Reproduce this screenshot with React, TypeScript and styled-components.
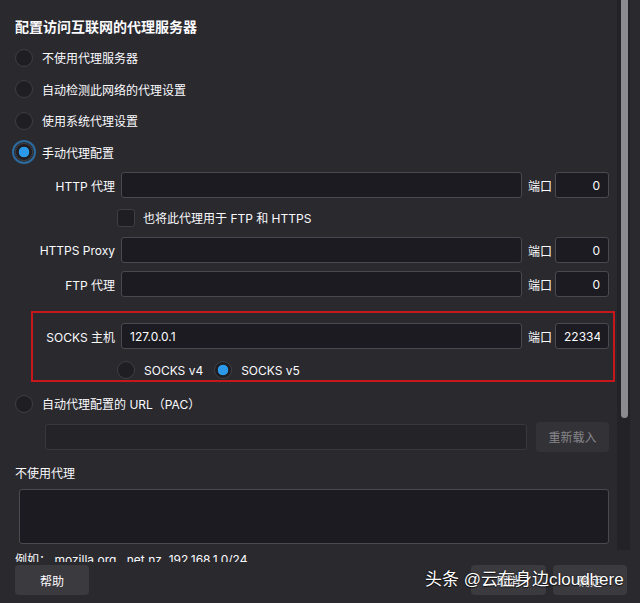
import React from 'react';
import styled, { createGlobalStyle, css } from 'styled-components';

const GlobalStyle = createGlobalStyle`
  html, body {
    margin: 0;
    padding: 0;
    background: #2a292e;
  }
  body {
    font-family: Inter, "Noto Sans CJK SC", sans-serif;
    font-size: 12px;
    color: #fbfbfe;
  }
  * {
    box-sizing: border-box;
  }
`;

const Window = styled.div`
  position: relative;
  width: 640px;
  height: 603px;
  display: flex;
  flex-direction: column;
  overflow: hidden;
  background: #2a292e;
`;

const Body = styled.div`
  display: flex;
  height: 562px;
  flex: none;
  overflow: hidden;
`;

const Content = styled.div`
  width: 617px;
  flex: none;
  padding: 17px 8px 0 15px;
`;

const ScrollTrack = styled.div`
  width: 13px;
  height: 550px;
  flex: none;
  padding: 0 2px 0 4px;
  background: #232227;
`;

const ScrollThumb = styled.div`
  width: 7px;
  height: 418px;
  border-radius: 0 0 4px 4px;
  background: #8b8a8f;
`;

const Title = styled.div`
  font-size: 14px;
  font-weight: 700;
  line-height: 20px;
  margin-bottom: 5px;
`;

const RadioRow = styled.div<{ $top?: number }>`
  display: flex;
  align-items: center;
  gap: 9px;
  height: 31.5px;
  margin-top: ${p => p.$top || 0}px;
`;

const Radio = styled.span<{ $checked?: boolean; $focus?: boolean }>`
  width: 18px;
  height: 18px;
  flex: none;
  border-radius: 50%;
  background: #1f1e23;
  border: 1px solid #3f3e44;
  ${p =>
    p.$checked &&
    css`
      background: radial-gradient(
        circle closest-side,
        #2b98e8 0,
        #2b98e8 62%,
        #1f1e23 70%
      );
    `}
  ${p =>
    p.$focus &&
    css`
      box-shadow: 0 0 0 1px #2a292e, 0 0 0 3px #2d6a9c;
    `}
`;

const FormRow = styled.div<{ $labelWidth: number }>`
  display: grid;
  grid-template-columns: ${p => p.$labelWidth}px 1fr 21px 54px;
  column-gap: 6px;
  align-items: center;
  height: 34px;
`;

const FieldLabel = styled.span`
  text-align: right;
  white-space: nowrap;
`;

const PortLabel = styled.span`
  white-space: nowrap;
`;

const TextInput = styled.input<{ $alignRight?: boolean; $disabled?: boolean }>`
  height: 26px;
  width: 100%;
  min-width: 0;
  padding: 0 8px;
  font: inherit;
  font-size: 12px;
  color: #fbfbfe;
  background: #1c1b21;
  border: 1px solid #4a494f;
  border-radius: 3px;
  outline: none;
  text-align: ${p => (p.$alignRight ? 'right' : 'left')};
  ${p =>
    p.$disabled &&
    css`
      background: #242328;
      border-color: #39383d;
    `}
`;

const CheckRow = styled.div`
  display: flex;
  align-items: center;
  gap: 8px;
  height: 31px;
  padding-left: 102px;
`;

const Checkbox = styled.span`
  width: 18px;
  height: 18px;
  flex: none;
  border-radius: 3px;
  background: #1f1e23;
  border: 1px solid #3f3e44;
`;

const Highlight = styled.div`
  margin: 10px -6px 0 16px;
  border: 2px solid #c8161d;
  padding: 6px 4px 0 0;
`;

const Versions = styled.div`
  display: flex;
  align-items: center;
  height: 20px;
  margin-top: 7px;
  padding-left: 84px;
`;

const VersionLabel = styled.span`
  margin: 0 11px 0 9px;
`;

const PacRow = styled.div`
  display: flex;
  align-items: center;
  gap: 9px;
  height: 34px;
  padding-left: 30px;
`;

const GhostButton = styled.div`
  width: 73px;
  height: 30px;
  flex: none;
  display: flex;
  align-items: center;
  justify-content: center;
  border-radius: 4px;
  background: #333237;
  color: #86858a;
`;

const SectionLabel = styled.div<{ $top: number }>`
  line-height: 20px;
  margin-top: ${p => p.$top}px;
  white-space: nowrap;
`;

const TextArea = styled.div`
  height: 55px;
  margin: 5px 0 0 4px;
  background: #1c1b21;
  border: 1px solid #4a494f;
  border-radius: 3px;
`;

const Footer = styled.div`
  display: flex;
  justify-content: space-between;
  padding: 3px 13px 0 15px;
  height: 41px;
`;

const FooterGroup = styled.div`
  display: flex;
  gap: 7px;
`;

const Button = styled.div<{ $width: number }>`
  width: ${p => p.$width}px;
  height: 30px;
  display: flex;
  align-items: center;
  justify-content: center;
  border-radius: 4px;
  background: #3b3a3f;
`;

const Watermark = styled.div`
  position: absolute;
  left: 425px;
  top: 569px;
  font-family: "Liberation Sans", "Noto Sans CJK SC", sans-serif;
  font-size: 17px;
  line-height: 22px;
  color: #ffffff;
  white-space: nowrap;
  text-shadow: 0 0 2px rgba(0, 0, 0, 0.8), 0 1px 1px rgba(0, 0, 0, 0.6);
`;

const mainOptions = ['不使用代理服务器', '自动检测此网络的代理设置', '使用系统代理设置'];

const Field: React.FC<{ label: string; value?: string; port: string; labelWidth?: number }> = ({
  label,
  value = '',
  port,
  labelWidth = 100,
}) => (
  <FormRow $labelWidth={labelWidth}>
    <FieldLabel>{label}</FieldLabel>
    <TextInput readOnly value={value} />
    <PortLabel>端口</PortLabel>
    <TextInput readOnly value={port} $alignRight />
  </FormRow>
);

export default function App() {
  return (
    <Window>
      <GlobalStyle />
      <Body>
        <Content>
          <Title>配置访问互联网的代理服务器</Title>
          {mainOptions.map(label => (
            <RadioRow key={label}>
              <Radio />
              {label}
            </RadioRow>
          ))}
          <RadioRow>
            <Radio $checked $focus />
            手动代理配置
          </RadioRow>

          <Field label="HTTP 代理" port="0" />
          <CheckRow>
            <Checkbox />
            也将此代理用于 FTP 和 HTTPS
          </CheckRow>
          <Field label="HTTPS Proxy" port="0" />
          <Field label="FTP 代理" port="0" />

          <Highlight>
            <Field label="SOCKS 主机" value="127.0.0.1" port="22334" labelWidth={82} />
            <Versions>
              <Radio />
              <VersionLabel>SOCKS v4</VersionLabel>
              <Radio $checked />
              <VersionLabel>SOCKS v5</VersionLabel>
            </Versions>
          </Highlight>

          <RadioRow $top={6}>
            <Radio />
            自动代理配置的 URL（PAC）
          </RadioRow>
          <PacRow>
            <TextInput readOnly value="" $disabled />
            <GhostButton>重新载入</GhostButton>
          </PacRow>

          <SectionLabel $top={10}>不使用代理</SectionLabel>
          <TextArea />
          <SectionLabel $top={6}>例如：.mozilla.org, .net.nz, 192.168.1.0/24</SectionLabel>
        </Content>
        <ScrollTrack>
          <ScrollThumb />
        </ScrollTrack>
      </Body>
      <Footer>
        <Button $width={74}>帮助</Button>
        <FooterGroup>
          <Button $width={75}>取消</Button>
          <Button $width={74}>确定</Button>
        </FooterGroup>
      </Footer>
      <Watermark>头条 @云在身边cloudhere</Watermark>
    </Window>
  );
}
